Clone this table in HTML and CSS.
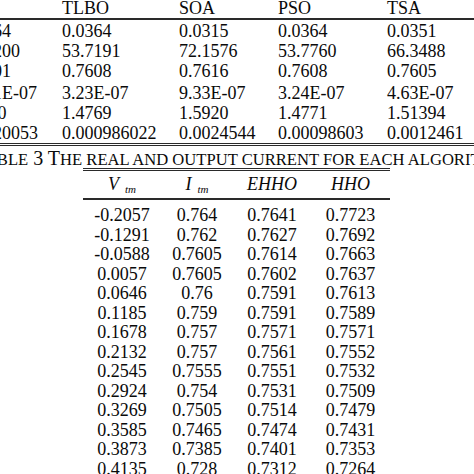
FILE: index.html
```html
<!DOCTYPE html>
<html>
<head>
<meta charset="utf-8">
<link rel="stylesheet" href="styles.css">
</head>
<body>
<div class="page">
  <table class="t1">
    <colgroup>
      <col class="c0"><col class="c1"><col class="c2"><col class="c3"><col class="c4">
    </colgroup>
    <thead>
      <tr><th></th><th>TLBO</th><th>SOA</th><th>PSO</th><th>TSA</th></tr>
    </thead>
    <tbody>
      <tr><td>0.0364</td><td>0.0364</td><td>0.0315</td><td>0.0364</td><td>0.0351</td></tr>
      <tr><td>53.7200</td><td>53.7191</td><td>72.1576</td><td>53.7760</td><td>66.3488</td></tr>
      <tr><td>0.7601</td><td>0.7608</td><td>0.7616</td><td>0.7608</td><td>0.7605</td></tr>
      <tr class="tall"><td>3.231E-07</td><td>3.23E-07</td><td>9.33E-07</td><td>3.24E-07</td><td>4.63E-07</td></tr>
      <tr><td>1.47.0</td><td>1.4769</td><td>1.5920</td><td>1.4771</td><td>1.51394</td></tr>
      <tr><td>0.0020053</td><td>0.000986022</td><td>0.0024544</td><td>0.00098603</td><td>0.0012461</td></tr>
    </tbody>
  </table>

  <div class="caption">T<span class="sc">able</span> 3 T<span class="sc">he real and output current for each algorithm</span></div>

  <table class="t2">
    <colgroup>
      <col class="d1"><col class="d2"><col class="d3"><col class="d4">
    </colgroup>
    <thead>
      <tr>
        <th><i>V</i><sub>tm</sub></th>
        <th><i>I</i><sub>tm</sub></th>
        <th><i>EHHO</i></th>
        <th><i>HHO</i></th>
      </tr>
    </thead>
    <tbody>
      <tr><td>-0.2057</td><td>0.764</td><td>0.7641</td><td>0.7723</td></tr>
      <tr><td>-0.1291</td><td>0.762</td><td>0.7627</td><td>0.7692</td></tr>
      <tr><td>-0.0588</td><td>0.7605</td><td>0.7614</td><td>0.7663</td></tr>
      <tr><td>0.0057</td><td>0.7605</td><td>0.7602</td><td>0.7637</td></tr>
      <tr><td>0.0646</td><td>0.76</td><td>0.7591</td><td>0.7613</td></tr>
      <tr><td>0.1185</td><td>0.759</td><td>0.7591</td><td>0.7589</td></tr>
      <tr><td>0.1678</td><td>0.757</td><td>0.7571</td><td>0.7571</td></tr>
      <tr><td>0.2132</td><td>0.757</td><td>0.7561</td><td>0.7552</td></tr>
      <tr><td>0.2545</td><td>0.7555</td><td>0.7551</td><td>0.7532</td></tr>
      <tr><td>0.2924</td><td>0.754</td><td>0.7531</td><td>0.7509</td></tr>
      <tr><td>0.3269</td><td>0.7505</td><td>0.7514</td><td>0.7479</td></tr>
      <tr><td>0.3585</td><td>0.7465</td><td>0.7474</td><td>0.7431</td></tr>
      <tr><td>0.3873</td><td>0.7385</td><td>0.7401</td><td>0.7353</td></tr>
      <tr><td>0.4135</td><td>0.728</td><td>0.7312</td><td>0.7264</td></tr>
    </tbody>
  </table>
</div>
</body>
</html>
```

FILE: styles.css
```css
html, body {
  margin: 0;
  padding: 0;
  overflow: hidden;
  background: #ffffff;
}

body {
  width: 474px;
  height: 474px;
  font-family: "Liberation Serif", "Times New Roman", serif;
  font-size: 18px;
  color: #0a0a0a;
}

.page {
  width: 474px;
  height: 474px;
  overflow: hidden;
}

/* ---------- top table (cropped) ---------- */
.t1 {
  border-collapse: collapse;
  table-layout: fixed;
  width: 585.5px;
  margin-left: -38.5px;
  margin-top: -1px;
}
.t1 .c0 { width: 100.5px; }
.t1 .c1 { width: 117px; }
.t1 .c2 { width: 99px; }
.t1 .c3 { width: 109px; }
.t1 .c4 { width: 160px; }

.t1 th,
.t1 td {
  padding: 0;
  text-align: left;
  font-weight: normal;
  white-space: nowrap;
  line-height: 20px;
  height: 20px;
}
.t1 tbody tr:first-child td {
  padding-top: 1px;
}
.t1 tbody tr.tall td {
  padding-top: 2px;
}
.t1 thead th {
  height: 19px;
  line-height: 19px;
  border-bottom: 2px solid #2a2a2a;
}
.t1 tbody tr:last-child td {
  border-bottom: 3px double #2a2a2a;
}

/* ---------- caption ---------- */
.caption {
  width: 700px;
  margin-left: -110px;
  margin-top: 1px;
  padding-top: 1px;
  text-align: center;
  white-space: nowrap;
  font-size: 20px;
  line-height: 20px;
  height: 20px;
}
.caption .sc {
  text-transform: uppercase;
  font-size: 16.6px;
}

/* ---------- second table ---------- */
.t2 {
  border-collapse: collapse;
  table-layout: fixed;
  width: 307px;
  margin-left: 83px;
}
.t2 .d1 { width: 78px; }
.t2 .d2 { width: 72px; }
.t2 .d3 { width: 78px; }
.t2 .d4 { width: 79px; }

.t2 th,
.t2 td {
  padding: 0;
  text-align: center;
  font-weight: normal;
  white-space: nowrap;
}
.t2 thead th {
  height: 27px;
  line-height: 27px;
  border-top: 3px double #2a2a2a;
  border-bottom: 2px solid #2a2a2a;
}
.t2 thead sub {
  font-size: 11px;
  font-style: italic;
  vertical-align: -3px;
  margin-left: 6px;
  line-height: 0;
}
.t2 td {
  height: 19.5px;
  line-height: 19.5px;
}
.t2 tbody tr:first-child td {
  padding-top: 6px;
}
```
